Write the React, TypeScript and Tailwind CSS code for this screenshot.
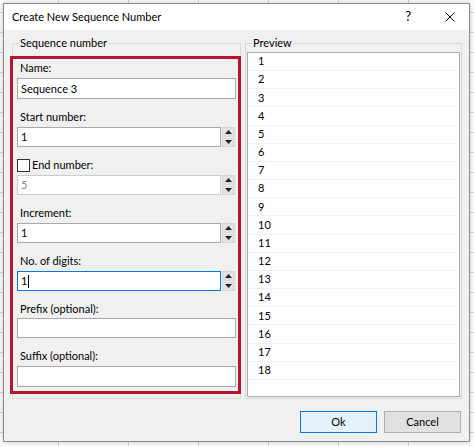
import React from "react";

const font = "font-['Lato',sans-serif]";

function Spinner() {
  return (
    <div className="w-[13px] ml-[1px] mr-[1px] flex flex-col gap-[1px] bg-[#f0f0f0]">
      <div className="flex-1 flex items-center justify-center bg-[#e3e3e3] border border-[#d6d6d6]">
        <svg width="7" height="4" viewBox="0 0 7 4">
          <path d="M0 4 L3.5 0 L7 4 Z" fill="#222" />
        </svg>
      </div>
      <div className="flex-1 flex items-center justify-center bg-[#e3e3e3] border border-[#d6d6d6]">
        <svg width="7" height="4" viewBox="0 0 7 4">
          <path d="M0 0 L7 0 L3.5 4 Z" fill="#222" />
        </svg>
      </div>
    </div>
  );
}

function Label({ children }: { children: React.ReactNode }) {
  return <div className="h-[16px] leading-[16px] pl-[3px] text-[11px] text-black">{children}</div>;
}

export default function App() {
  const rows = Array.from({ length: 18 }, (_, i) => i + 1);

  return (
    <div
      className={`${font} w-[474px] h-[446px] overflow-hidden bg-white pt-[3px] pl-[3px] bg-[linear-gradient(to_right,#d6d6d6_1px,transparent_1px),linear-gradient(to_bottom,#d6d6d6_1px,transparent_1px)] bg-size-[70px_20px] bg-position-[58px_12px]`}
    >
      <div className="w-[467px] h-[439px] border border-[#8c8c8c] bg-[#f0f0f0] flex flex-col shadow-[0_0_6px_rgba(0,0,0,0.25)]">
        {/* title bar */}
        <div className="h-[26px] bg-white flex items-center pl-[8px] pr-[14px]">
          <span className="text-[11px] text-black">Create New Sequence Number</span>
          <span className="ml-auto mr-[34px] text-[13px] text-black">?</span>
          <svg width="10" height="10" viewBox="0 0 10 10">
            <path d="M0.5 0.5 L9.5 9.5 M9.5 0.5 L0.5 9.5" stroke="#111" strokeWidth="1" />
          </svg>
        </div>

        {/* body */}
        <div className="flex pt-[13px] pl-[8px] pr-[7px]">
          {/* sequence number group */}
          <div className="relative w-[229px] h-[356px] border border-[#d9d9d9]">
            <span className="absolute -top-[9px] left-[6px] px-[1px] h-[16px] leading-[16px] bg-[#f0f0f0] text-[11px] text-black">
              Sequence number
            </span>
            <div className="-ml-[3px] -mr-[1px] mt-[12px] border-[3px] border-[#b3172f] pl-[4px] pr-[2px] pt-[1px] pb-[4px]">
              <Label>Name:</Label>
              <div className="mt-[2px] h-[21px] border border-[#a8a8a8] bg-white pl-[3px] text-[11px] leading-[19px] text-black">
                Sequence 3
              </div>

              <div className="mt-[10px]">
                <Label>Start number:</Label>
              </div>
              <div className="mt-[2px] h-[20px] flex">
                <div className="flex-1 border border-[#a8a8a8] bg-white pl-[3px] text-[11px] leading-[18px] text-black">1</div>
                <Spinner />
              </div>

              <div className="mt-[10px] h-[16px] flex items-center">
                <div className="w-[13px] h-[13px] border border-[#333] bg-white" />
                <span className="ml-[2px] text-[11px] leading-[16px] text-black">End number:</span>
              </div>
              <div className="mt-[2px] h-[20px] flex">
                <div className="flex-1 border border-[#cccccc] bg-white pl-[3px] text-[11px] leading-[18px] text-[#8a8a8a]">5</div>
                <Spinner />
              </div>

              <div className="mt-[10px]">
                <Label>Increment:</Label>
              </div>
              <div className="mt-[2px] h-[20px] flex">
                <div className="flex-1 border border-[#a8a8a8] bg-white pl-[3px] text-[11px] leading-[18px] text-black">1</div>
                <Spinner />
              </div>

              <div className="mt-[10px]">
                <Label>No. of digits:</Label>
              </div>
              <div className="mt-[2px] h-[20px] flex">
                <div className="flex-1 flex items-center border border-[#0078d7] bg-white pl-[3px] text-[11px] leading-[18px] text-black">
                  1<span className="ml-[1px] w-[1px] h-[13px] bg-black" />
                </div>
                <Spinner />
              </div>

              <div className="mt-[10px]">
                <Label>Prefix (optional):</Label>
              </div>
              <div className="mt-[1px] h-[20px] border border-[#a8a8a8] bg-white" />

              <div className="mt-[10px]">
                <Label>Suffix (optional):</Label>
              </div>
              <div className="mt-[2px] h-[21px] border border-[#a8a8a8] bg-white" />
            </div>
          </div>

          {/* preview group */}
          <div className="relative ml-[4px] w-[217px] h-[356px] border border-[#d9d9d9]">
            <span className="absolute -top-[9px] left-[6px] px-[1px] h-[16px] leading-[16px] bg-[#f0f0f0] text-[11px] text-black">
              Preview
            </span>
            <div className="mt-[8px] mx-[1px] h-[345px] border border-[#acacac] bg-white pr-[3px]">
              {rows.map((n) => (
                <div
                  key={n}
                  className="h-[18.17px] border-b border-[#f0f0f0] pl-[10px] flex items-center text-[11px] text-black"
                >
                  {n}
                </div>
              ))}
            </div>
          </div>
        </div>

        {/* buttons */}
        <div className="mt-[12px] pr-[8px] flex justify-end gap-[7px]">
          <button className="w-[77px] h-[22px] border border-[#0078d7] bg-[#e5f1fb] text-[11px] text-black">Ok</button>
          <button className="w-[77px] h-[22px] border border-[#adadad] bg-[#e1e1e1] text-[11px] text-black">Cancel</button>
        </div>
      </div>
    </div>
  );
}
